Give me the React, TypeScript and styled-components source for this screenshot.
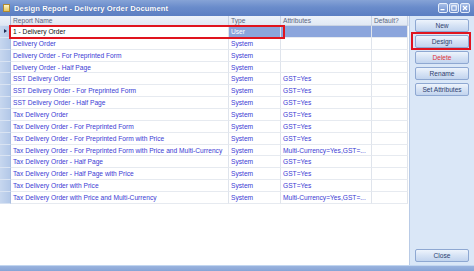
import React from "react";
import styled, { createGlobalStyle } from "styled-components";

const Global = createGlobalStyle`
  html, body { margin: 0; padding: 0; background: #ffffff; }
  body { font-family: "Liberation Sans", Arial, sans-serif; }
`;

const Window = styled.div`
  width: 474px;
  height: 271px;
  display: flex;
  flex-direction: column;
  background: #ffffff;
  position: relative;
  overflow: hidden;
`;

const TitleBar = styled.div`
  height: 16px;
  flex: none;
  display: flex;
  align-items: center;
  padding: 0 4px 0 3px;
  background: linear-gradient(#86a3d6, #6a8ccb 45%, #5b7ec2);
  color: #ffffff;
  font-size: 7.6px;
  font-weight: bold;
  text-shadow: 0 0 1px #3a5a9a;
  gap: 4px;
`;

const TitleIcon = styled.div`
  width: 7px;
  height: 8px;
  background: linear-gradient(#fff6c8, #e6c65a);
  border: 1px solid #b08a30;
  box-sizing: border-box;
`;

const TitleText = styled.div`
  flex: 1;
  letter-spacing: 0.1px;
`;

const Controls = styled.div`
  display: flex;
  gap: 1px;
`;

const Ctl = styled.div`
  width: 10px;
  height: 10px;
  border-radius: 2px;
  background: linear-gradient(#a9c0e8, #6d8fcf);
  border: 1px solid #e6eefb;
  box-sizing: border-box;
  display: flex;
  align-items: center;
  justify-content: center;
`;

const Body = styled.div`
  flex: 1;
  display: flex;
  min-height: 0;
`;

const GridArea = styled.div`
  width: 410px;
  flex: none;
  position: relative;
  background: #ffffff;
  border-right: 1px solid #b9cbe6;
  box-sizing: border-box;
`;

const Row = styled.div<{ $header?: boolean }>`
  display: grid;
  grid-template-columns: 11px 218px 52px 91px 36px;
  height: ${(p) => (p.$header ? "10px" : "11.87px")};
  font-size: 6.65px;
  color: ${(p) => (p.$header ? "#5a6680" : "#3a3ad4")};
  background: ${(p) => (p.$header ? "linear-gradient(#eef3fa, #dfe7f3)" : "#ffffff")};
`;

const Cell = styled.div<{ $sel?: boolean; $header?: boolean }>`
  display: flex;
  align-items: center;
  padding-left: 2px;
  white-space: nowrap;
  overflow: hidden;
  border-right: 1px solid ${(p) => (p.$header ? "#c9d3e3" : "#dfe4ec")};
  border-bottom: 1px solid ${(p) => (p.$header ? "#c9d3e3" : "#e6eaf0")};
  box-sizing: border-box;
  background: ${(p) => (p.$sel ? "#8ba5dc" : "transparent")};
  color: ${(p) => (p.$sel ? "#ffffff" : "inherit")};
`;

const NameCell = styled(Cell)<{ $active?: boolean }>`
  color: ${(p) => (p.$active ? "#111111" : "inherit")};
`;

const RowHead = styled.div<{ $header?: boolean }>`
  background: ${(p) => (p.$header ? "linear-gradient(#eef3fa, #dfe7f3)" : "linear-gradient(90deg, #c7d7ef, #b3c8e8)")};
  border-right: 1px solid #a9bde0;
  border-bottom: 1px solid #d9e3f2;
  box-sizing: border-box;
  display: flex;
  align-items: center;
  justify-content: flex-start;
  padding-left: 4px;
`;

const Arrow = styled.div`
  width: 0;
  height: 0;
  border-top: 2.5px solid transparent;
  border-bottom: 2.5px solid transparent;
  border-left: 3px solid #1c2a55;
`;

const Highlight = styled.div<{ $l: number; $t: number; $w: number; $h: number }>`
  position: absolute;
  left: ${(p) => p.$l}px;
  top: ${(p) => p.$t}px;
  width: ${(p) => p.$w}px;
  height: ${(p) => p.$h}px;
  border: 2px solid #e0141e;
  box-sizing: border-box;
  pointer-events: none;
`;

const Side = styled.div`
  flex: 1;
  background: #dae7f7;
  display: flex;
  flex-direction: column;
  align-items: center;
  padding: 3px 0 3px 0;
  gap: 3px;
  position: relative;
`;

const Btn = styled.div<{ $danger?: boolean }>`
  width: 54px;
  height: 13px;
  flex: none;
  box-sizing: border-box;
  border: 1px solid #8ea8d2;
  border-radius: 2px;
  background: linear-gradient(#eef4fc, #d6e3f5 50%, #c2d4ee);
  display: flex;
  align-items: center;
  justify-content: center;
  font-size: 6.6px;
  color: ${(p) => (p.$danger ? "#e0323c" : "#2e4170")};
`;

const Spacer = styled.div`
  flex: 1;
`;

const BottomBar = styled.div`
  height: 5px;
  flex: none;
  border-top: 1px solid #c2d6f0;
  background: linear-gradient(#9ab4df, #87a4d6);
`;

const rows: [string, string, string][] = [
  ["1 - Delivery Order", "User", ""],
  ["Delivery Order", "System", ""],
  ["Delivery Order - For Preprinted Form", "System", ""],
  ["Delivery Order - Half Page", "System", ""],
  ["SST Delivery Order", "System", "GST=Yes"],
  ["SST Delivery Order - For Preprinted Form", "System", "GST=Yes"],
  ["SST Delivery Order - Half Page", "System", "GST=Yes"],
  ["Tax Delivery Order", "System", "GST=Yes"],
  ["Tax Delivery Order - For Preprinted Form", "System", "GST=Yes"],
  ["Tax Delivery Order - For Preprinted Form with Price", "System", "GST=Yes"],
  ["Tax Delivery Order - For Preprinted Form with Price and Multi-Currency", "System", "Multi-Currency=Yes,GST=..."],
  ["Tax Delivery Order - Half Page", "System", "GST=Yes"],
  ["Tax Delivery Order - Half Page with Price", "System", "GST=Yes"],
  ["Tax Delivery Order with Price", "System", "GST=Yes"],
  ["Tax Delivery Order with Price and Multi-Currency", "System", "Multi-Currency=Yes,GST=..."],
];

export default function App() {
  return (
    <Window>
      <Global />
      <TitleBar>
        <TitleIcon />
        <TitleText>Design Report - Delivery Order Document</TitleText>
        <Controls>
          <Ctl>
            <svg width="6" height="6" viewBox="0 0 6 6"><rect x="0.5" y="4" width="4" height="1.3" fill="#fff" /></svg>
          </Ctl>
          <Ctl>
            <svg width="6" height="6" viewBox="0 0 6 6"><rect x="0.8" y="0.8" width="4.4" height="4.4" fill="none" stroke="#fff" strokeWidth="1" /></svg>
          </Ctl>
          <Ctl>
            <svg width="6" height="6" viewBox="0 0 6 6"><path d="M1 1L5 5M5 1L1 5" stroke="#fff" strokeWidth="1.3" /></svg>
          </Ctl>
        </Controls>
      </TitleBar>
      <Body>
        <GridArea>
          <Row $header>
            <RowHead $header />
            <Cell $header>Report Name</Cell>
            <Cell $header>Type</Cell>
            <Cell $header>Attributes</Cell>
            <Cell $header>Default?</Cell>
          </Row>
          {rows.map(([name, type, attr], i) => (
            <Row key={i}>
              <RowHead>{i === 0 && <Arrow />}</RowHead>
              <NameCell $active={i === 0}>{name}</NameCell>
              <Cell $sel={i === 0}>{type}</Cell>
              <Cell $sel={i === 0}>{attr}</Cell>
              <Cell $sel={i === 0}></Cell>
            </Row>
          ))}
          <Highlight $l={9} $t={9} $w={276} $h={14} />
        </GridArea>
        <Side>
          <Btn>New</Btn>
          <Btn>Design</Btn>
          <Btn $danger>Delete</Btn>
          <Btn>Rename</Btn>
          <Btn>Set Attributes</Btn>
          <Spacer />
          <Btn>Close</Btn>
          <Highlight $l={1} $t={16} $w={60} $h={18} />
        </Side>
      </Body>
      <BottomBar />
    </Window>
  );
}
